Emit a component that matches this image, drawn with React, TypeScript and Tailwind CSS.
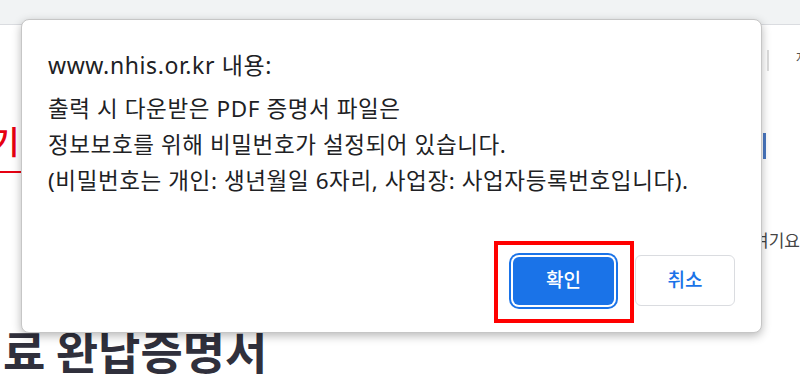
import React from "react";

const uiFont = {
  fontFamily: '"Noto Sans", "Noto Sans CJK KR", sans-serif',
};

const messageLines = [
  "출력 시 다운받은 PDF 증명서 파일은",
  "정보보호를 위해 비밀번호가 설정되어 있습니다.",
  "(비밀번호는 개인: 생년월일 6자리, 사업장: 사업자등록번호입니다).",
];

const AlertDialog = () => {
  return (
    <div className="absolute left-[21px] top-[19px] flex h-[314px] w-[741px] flex-col rounded-lg border border-[#c6c6c6] bg-white px-[26px] pb-[26px] pt-[30px] text-[#202124] shadow-[0_3px_10px_rgba(0,0,0,0.28)]">
      <div className="text-[23px] leading-[30px] tracking-[0.6px]">www.nhis.or.kr 내용:</div>
      <div className="mt-[11px] text-[22.5px] leading-[36px] tracking-[0.6px]">
        {messageLines.map((line) => (
          <div key={line}>{line}</div>
        ))}
      </div>
      <div className="mt-auto flex items-center justify-end gap-[21px]">
        <span className="relative">
          <button className="flex h-[48px] w-[101px] items-center justify-center rounded-md bg-[#1a73e8] text-[19px] font-medium text-white ring-2 ring-[#1a73e8] ring-offset-2">
            확인
          </button>
          <span className="pointer-events-none absolute -bottom-[18px] -left-[19px] -right-[20px] -top-[16px] border-4 border-[#ff0000]" />
        </span>
        <button className="flex h-[51px] w-[100px] items-center justify-center rounded-md border border-[#dadce0] bg-white text-[19px] font-medium text-[#1a73e8]">
          취소
        </button>
      </div>
    </div>
  );
};

export default function App() {
  return (
    <div
      className="relative h-[390px] w-[800px] overflow-hidden bg-white"
      style={{ fontFamily: '"Noto Sans CJK KR", "Noto Sans", sans-serif' }}
    >
      <div className="h-[25px] border-b border-[#dadce0] bg-[#f1f3f4]" />

      <div className="flex h-[298px]">
        <div className="w-[21px] overflow-hidden">
          <div className="ml-[-10px] mt-[94px] text-[32px] font-medium leading-[42px] text-[#e60012]">기</div>
          <div className="mt-[10px] h-[2px] w-full bg-[#e60012]" />
        </div>
        <div className="flex-1" />
        <div className="relative flex w-[38px] flex-col overflow-hidden">
          <div className="ml-[5px] mt-[25px] h-[21px] w-[2px] bg-[#dcdcdc]" />
          <div className="ml-[1px] mt-[62px] h-[26px] w-[3px] bg-[#4a78c2]" />
          <div className="ml-[-9px] mt-[71px] whitespace-nowrap text-[17px] leading-[20px] text-[#444]">여기요</div>
          <div className="absolute left-[34px] top-[24px] text-[13px] leading-[16px] text-[#555]">자</div>
        </div>
      </div>

      <div className="whitespace-nowrap pl-[3px] text-[46px] font-bold leading-[52px] text-[#30303c]">
        료 완납증명서
      </div>

      <div style={uiFont}>
        <AlertDialog />
      </div>
    </div>
  );
}
